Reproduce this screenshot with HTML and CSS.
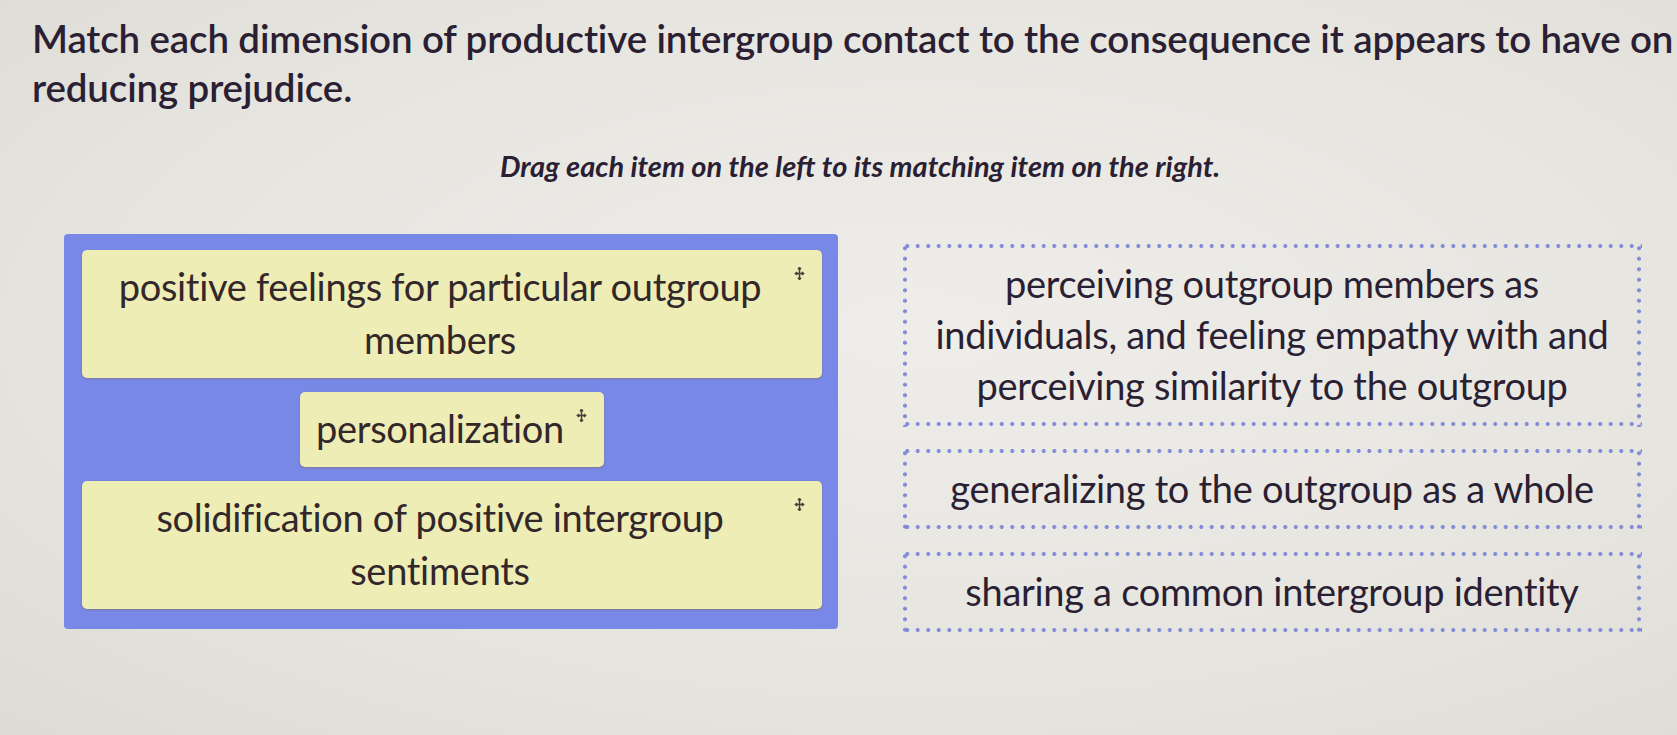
FILE: index.html
```html
<!DOCTYPE html>
<html lang="en">
<head>
    <meta charset="UTF-8">
    <meta name="viewport" content="width=device-width, initial-scale=1.0">
    <title>Matching Question</title>
    <link rel="stylesheet" href="styles.css">
</head>
<body>
    <div class="question">
        <h1>Match each dimension of productive intergroup contact to the consequence it appears to have on reducing prejudice.</h1>
        <p class="instructions">Drag each item on the left to its matching item on the right.</p>

        <div class="match-area">
            <!-- draggable answers -->
            <div class="source-list">
                <div class="drag-item wide">
                    positive feelings for particular outgroup members
                    <svg class="move-icon" viewBox="0 0 12 12"><path d="M6 0.5v11M2.2 6h7.6M4.6 2l1.4-1.5 1.4 1.5M4.6 10l1.4 1.5 1.4-1.5M3.8 4.6l-1.6 1.4 1.6 1.4M8.2 4.6l1.6 1.4-1.6 1.4"/></svg>
                </div>
                <div class="drag-item">
                    personalization
                    <svg class="move-icon" viewBox="0 0 12 12"><path d="M6 0.5v11M2.2 6h7.6M4.6 2l1.4-1.5 1.4 1.5M4.6 10l1.4 1.5 1.4-1.5M3.8 4.6l-1.6 1.4 1.6 1.4M8.2 4.6l1.6 1.4-1.6 1.4"/></svg>
                </div>
                <div class="drag-item wide">
                    solidification of positive intergroup sentiments
                    <svg class="move-icon" viewBox="0 0 12 12"><path d="M6 0.5v11M2.2 6h7.6M4.6 2l1.4-1.5 1.4 1.5M4.6 10l1.4 1.5 1.4-1.5M3.8 4.6l-1.6 1.4 1.6 1.4M8.2 4.6l1.6 1.4-1.6 1.4"/></svg>
                </div>
            </div>

            <!-- drop targets -->
            <div class="target-list">
                <div class="drop-target">perceiving outgroup members as individuals, and feeling empathy with and perceiving similarity to the outgroup</div>
                <div class="drop-target">generalizing to the outgroup as a whole</div>
                <div class="drop-target">sharing a common intergroup identity</div>
            </div>
        </div>
    </div>
</body>
</html>
```

FILE: styles.css
```css
html, body {
    height: 100%;
}
body {
    margin: 0;
    background: radial-gradient(ellipse at 55% 45%, #eeede9 0%, #e7e5e0 60%, #dddbd6 100%);
    font-family: Lato, "Open Sans", sans-serif;
    color: #2a1f33;
    overflow: hidden;
}
.question {
    padding: 14px 0 0 32px;
}
h1 {
    margin: 0;
    font-size: 38.5px;
    font-weight: 600;
    line-height: 49px;
    letter-spacing: -0.12px;
}
.instructions {
    margin: 36px 0 0;
    padding-left: 468px;
    font-size: 29px;
    line-height: 36px;
    font-weight: 700;
    font-style: italic;
}
.match-area {
    display: flex;
    align-items: flex-start;
    gap: 64px;
    margin-top: 50px;
    padding-left: 32px;
}
.source-list {
    width: 740px;
    background: #7788e7;
    border-radius: 4px;
    padding: 16px 16px 20px 18px;
    display: flex;
    flex-direction: column;
    align-items: center;
    gap: 14px;
}
.drag-item {
    position: relative;
    background: #eeedb6;
    border-radius: 5px;
    box-shadow: 0 1px 2px rgba(140, 100, 40, 0.45);
    font-size: 38px;
    line-height: 53px;
    letter-spacing: -0.3px;
    color: #33272a;
    text-align: center;
    padding: 10px 40px 12px 16px;
}
.drag-item.wide {
    align-self: stretch;
}
.move-icon {
    position: absolute;
    top: 17px;
    right: 16px;
    width: 13px;
    height: 13px;
    fill: none;
    stroke: #4a3f3a;
    stroke-width: 1.4;
}
.target-list {
    width: 740px;
    margin-top: 9px;
    display: flex;
    flex-direction: column;
    gap: 21px;
}
.drop-target {
    /* sparse round dots along each edge */
    background:
        radial-gradient(circle, #7f89d9 1.7px, transparent 2.2px) left top / 10.5px 6px repeat-x,
        radial-gradient(circle, #7f89d9 1.7px, transparent 2.2px) left bottom / 10.5px 6px repeat-x,
        radial-gradient(circle, #7f89d9 1.7px, transparent 2.2px) left top / 6px 10.5px repeat-y,
        radial-gradient(circle, #7f89d9 1.7px, transparent 2.2px) right top / 6px 10.5px repeat-y;
    font-size: 38px;
    line-height: 51px;
    letter-spacing: -0.3px;
    text-align: center;
    padding: 15px 20px 16px;
}
```
